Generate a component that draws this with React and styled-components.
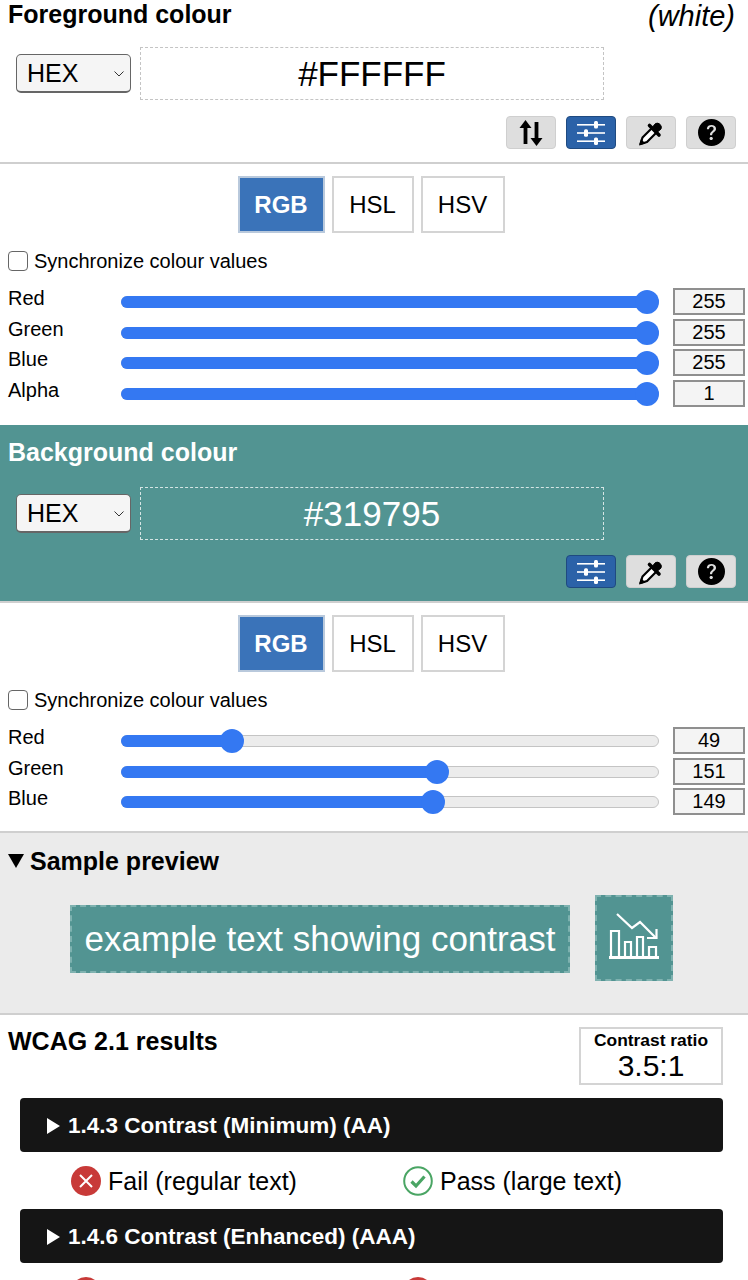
import React from "react";
import styled, { createGlobalStyle } from "styled-components";
import { BsQuestionCircleFill } from "react-icons/bs";

const GlobalStyle = createGlobalStyle`
  html, body {
    margin: 0;
    padding: 0;
    background: #fff;
    overflow: hidden;
    height: 1280px;
  }
  body, input, select {
    font-family: "Liberation Sans", Arial, sans-serif;
    color: #000;
  }
`;

const SwapIcon = () => (
  <svg width="26" height="28" viewBox="0 0 26 28" fill="currentColor">
    <path d="M7.5 1 L13.5 9 H9.4 V25 H5.6 V9 H1.5 Z" />
    <path d="M18.5 27 L12.5 19 H16.6 V3 H20.4 V19 H24.5 Z" />
  </svg>
);

const SlidersIcon = () => (
  <svg width="28" height="26" viewBox="0 0 28 26" fill="#fff">
    <rect x="0" y="4" width="28" height="1.6" />
    <rect x="0" y="12.2" width="28" height="1.6" />
    <rect x="0" y="20.4" width="28" height="1.6" />
    <rect x="17" y="1" width="4" height="7.5" rx="1.5" />
    <rect x="7" y="9.2" width="4" height="7.5" rx="1.5" />
    <rect x="17" y="17.5" width="4" height="7.5" rx="1.5" />
  </svg>
);

const DropperIcon = () => (
  <svg width="28" height="28" viewBox="0 0 28 28">
    <path d="M3.5 25 L5.5 18.5 L15 9 L19.5 13.5 L10 23 Z" fill="#fff" stroke="#000" strokeWidth="2.2" strokeLinejoin="round" />
    <path d="M2 26.5 L4 20 L8.5 24.5 Z" fill="#000" />
    <path d="M12.5 6.5 L22 16" stroke="#000" strokeWidth="3.6" strokeLinecap="round" />
    <path d="M15.5 8 L18.5 4.5 A4.2 4.2 0 0 1 24 10 L20.5 13 Z" fill="#000" stroke="#000" />
  </svg>
);

const FailIcon = () => (
  <svg width="30" height="30" viewBox="0 0 30 30">
    <circle cx="15" cy="15" r="15" fill="#c83a38" />
    <path d="M9 9 L21 21 M21 9 L9 21" stroke="#fff" strokeWidth="2" />
  </svg>
);

const PassIcon = () => (
  <svg width="30" height="30" viewBox="0 0 30 30">
    <circle cx="15" cy="15" r="13.8" fill="#fff" stroke="#4aa564" strokeWidth="2" />
    <path d="M8.5 15.5 L13 20 L21.5 10.5" fill="none" stroke="#4aa564" strokeWidth="3.2" />
  </svg>
);

const ChartIcon = () => (
  <svg width="52" height="50" viewBox="0 0 52 50" fill="none" stroke="#fff" strokeWidth="2.2">
    <path d="M1 44.5 H51" strokeWidth="3" />
    <path d="M3 44 V18 H11 V44" />
    <path d="M17 44 V29 H23 V44" />
    <path d="M29 44 V24 H35 V44" />
    <path d="M41 44 V34 H48 V44" />
    <path d="M9 1 L24 15 L32 9 L48 25" />
    <path d="M39 25 H48.5 V16" />
  </svg>
);

const Chevron = () => (
  <svg width="12" height="8" viewBox="0 0 12 8" fill="none" stroke="#333" strokeWidth="1">
    <path d="M1.5 1.5 L6 6 L10.5 1.5" />
  </svg>
);

const Page = styled.div`
  width: 748px;
  height: 1280px;
  overflow: hidden;
`;

const ColourSection = styled.section`
  height: ${(p) => p.$height}px;
  padding-top: ${(p) => p.$top}px;
  box-sizing: border-box;
  background: ${(p) => (p.$teal ? "#529492" : "#fff")};
  color: ${(p) => (p.$teal ? "#fff" : "#000")};
`;

const HeaderRow = styled.div`
  display: flex;
  justify-content: space-between;
  padding: 0 13px 0 8px;
`;

const Heading = styled.h2`
  margin: 0;
  font-size: 25px;
  line-height: 28px;
  font-weight: 700;
`;

const ColourName = styled.em`
  font-size: 29px;
  line-height: 32px;
`;

const FormatRow = styled.div`
  display: flex;
  align-items: center;
  gap: 9px;
  padding-left: 16px;
  margin-top: ${(p) => p.$top}px;
`;

const SelectWrap = styled.div`
  position: relative;
  width: 115px;
  height: 39px;
`;

const FormatSelect = styled.select`
  appearance: none;
  width: 100%;
  height: 100%;
  box-sizing: border-box;
  padding: 0 0 0 10px;
  font-size: 25px;
  background: #f5f5f5;
  border: 1px solid #666;
  border-bottom-width: 2px;
  border-radius: 5px;
`;

const SelectArrow = styled.span`
  position: absolute;
  right: 6px;
  top: 16px;
  line-height: 0;
  pointer-events: none;
`;

const ColourInput = styled.input`
  width: 464px;
  height: 53px;
  box-sizing: border-box;
  border: 1px dashed ${(p) => (p.$teal ? "#d5e5e4" : "#c4c4c4")};
  background: transparent;
  color: inherit;
  text-align: center;
  font-size: 35px;
  padding: 0;
  outline: none;
`;

const ToolRow = styled.div`
  display: flex;
  justify-content: flex-end;
  gap: 10px;
  padding-right: 12px;
  margin-top: ${(p) => p.$top}px;
`;

const ToolButton = styled.button`
  width: 50px;
  height: 33px;
  padding: 0;
  display: flex;
  align-items: center;
  justify-content: center;
  border-radius: 4px;
  color: #000;
  border: 1px solid ${(p) => (p.$active ? "#1f4a80" : "#cfcfcf")};
  background: ${(p) => (p.$active ? "#2b62a8" : "#dedede")};
`;

const Panel = styled.section`
  height: ${(p) => p.$height}px;
  box-sizing: border-box;
  padding-top: 12px;
  border-top: 2px solid #cfcfcf;
`;

const Tabs = styled.div`
  display: flex;
  justify-content: center;
  gap: 7px;
  padding-right: 6px;
`;

const Tab = styled.button`
  width: ${(p) => p.$width}px;
  height: 57px;
  padding: 0;
  box-sizing: border-box;
  font-family: inherit;
  font-size: 24px;
  color: ${(p) => (p.$active ? "#fff" : "#000")};
  font-weight: ${(p) => (p.$active ? 700 : 400)};
  background: ${(p) => (p.$active ? "#3a73b9" : "#fff")};
  border: 2px solid ${(p) => (p.$active ? "#b9c9dc" : "#d4d4d4")};
`;

const SyncRow = styled.label`
  display: flex;
  align-items: center;
  gap: 6px;
  margin: 18px 0 0 8px;
  font-size: 20px;
  line-height: 20px;
`;

const Checkbox = styled.span`
  width: 18px;
  height: 18px;
  border: 1px solid #666;
  border-radius: 4px;
  background: #fff;
`;

const SliderList = styled.div`
  margin-top: 17px;
  display: flex;
  flex-direction: column;
  gap: 3.7px;
`;

const SliderRow = styled.div`
  display: grid;
  grid-template-columns: 99px 538px 72px;
  column-gap: 14px;
  padding-left: 8px;
  height: 27px;
  align-items: center;
`;

const SliderLabel = styled.span`
  font-size: 20px;
  line-height: 22px;
  margin-top: -7px;
`;

const Track = styled.div`
  position: relative;
  height: 12px;
  margin-top: 1px;
  box-sizing: border-box;
  border-radius: 6px;
  background: #ececec;
  border: 1px solid #c4c4c4;
`;

const TrackFill = styled.div`
  position: absolute;
  left: -1px;
  top: -1px;
  bottom: -1px;
  background: #3478f2;
  border-radius: 6px;
`;

const Thumb = styled.div`
  position: absolute;
  top: -7px;
  width: 24px;
  height: 24px;
  margin-left: -13px;
  border-radius: 50%;
  background: #3478f2;
`;

const ValueBox = styled.input`
  width: 72px;
  height: 27px;
  box-sizing: border-box;
  border: 2px solid #8f8f8f;
  background: #f4f4f4;
  text-align: center;
  font-size: 20px;
  padding: 0;
  outline: none;
`;

const PreviewSection = styled.section`
  height: 182px;
  box-sizing: border-box;
  background: #ebebeb;
  border-top: 2px solid #cfcfcf;
  padding-top: 14px;
`;

const PreviewTitle = styled.div`
  display: flex;
  align-items: center;
  gap: 6px;
  padding-left: 8px;
  font-size: 25px;
  line-height: 28px;
  font-weight: 700;
`;

const TriangleDown = styled.span`
  width: 0;
  height: 0;
  border-left: 8px solid transparent;
  border-right: 8px solid transparent;
  border-top: 14px solid #000;
`;

const PreviewRow = styled.div`
  display: flex;
  align-items: center;
  gap: 25px;
  padding-left: 70px;
  margin-top: 20px;
`;

const SampleText = styled.div`
  width: 500px;
  height: 68px;
  margin-top: 2px;
  box-sizing: border-box;
  display: flex;
  align-items: center;
  justify-content: center;
  background: #529492;
  color: #fff;
  font-size: 35px;
  border: 2px dashed #7fb2b0;
  white-space: nowrap;
`;

const SampleIcon = styled.div`
  width: 78px;
  height: 86px;
  box-sizing: border-box;
  display: flex;
  align-items: center;
  justify-content: center;
  background: #529492;
  border: 2px dashed #7fb2b0;
`;

const ResultsSection = styled.section`
  border-top: 2px solid #cfcfcf;
`;

const ResultsHeader = styled.div`
  display: flex;
  justify-content: space-between;
  align-items: flex-start;
  padding: 12px 25px 0 8px;
`;

const RatioBox = styled.div`
  width: 144px;
  height: 58px;
  box-sizing: border-box;
  border: 2px solid #d4d4d4;
  text-align: center;
  font-size: 17.4px;
  line-height: 20px;
  font-weight: 700;
  padding-top: 1px;
`;

const RatioValue = styled.div`
  font-size: 30px;
  line-height: 32px;
  font-weight: 400;
`;

const Criterion = styled.div`
  display: flex;
  align-items: center;
  gap: 8px;
  height: 54px;
  box-sizing: border-box;
  padding: 2px 0 0 27px;
  margin: ${(p) => p.$top}px 25px 0 20px;
  background: #151515;
  color: #fff;
  border-radius: 4px;
  font-size: 22.5px;
  font-weight: 700;
`;

const TriangleRight = styled.span`
  width: 0;
  height: 0;
  border-top: 8px solid transparent;
  border-bottom: 8px solid transparent;
  border-left: 13px solid #fff;
`;

const ResultRow = styled.div`
  display: grid;
  grid-template-columns: 332px 1fr;
  padding: 14px 0 0 71px;
  height: 43px;
  box-sizing: content-box;
`;

const Result = styled.div`
  display: flex;
  align-items: center;
  gap: 7px;
  font-size: 25px;
  height: 30px;
`;

const ColourPanel = ({ values, height }) => (
  <Panel $height={height}>
    <Tabs>
      <Tab $width={87} $active>RGB</Tab>
      <Tab $width={82}>HSL</Tab>
      <Tab $width={84}>HSV</Tab>
    </Tabs>
    <SyncRow>
      <Checkbox />
      Synchronize colour values
    </SyncRow>
    <SliderList>
      {values.map(([label, value, max]) => {
        // thumb stays inside the track, 12px from each end
        const x = 12 + (value / max) * 514;
        return (
          <SliderRow key={label}>
            <SliderLabel>{label}</SliderLabel>
            <Track>
              <TrackFill style={{ width: x + 1 }} />
              <Thumb style={{ left: x }} />
            </Track>
            <ValueBox readOnly value={value} />
          </SliderRow>
        );
      })}
    </SliderList>
  </Panel>
);

const FormatControls = ({ colour, teal, top }) => (
  <FormatRow $top={top}>
    <SelectWrap>
      <FormatSelect defaultValue="HEX">
        <option>HEX</option>
      </FormatSelect>
      <SelectArrow><Chevron /></SelectArrow>
    </SelectWrap>
    <ColourInput readOnly value={colour} $teal={teal} />
  </FormatRow>
);

const App = () => (
  <Page>
    <GlobalStyle />
    <ColourSection $height={162} $top={0}>
      <HeaderRow>
        <Heading>Foreground colour</Heading>
        <ColourName>(white)</ColourName>
      </HeaderRow>
      <FormatControls colour="#FFFFFF" top={15} />
      <ToolRow $top={16}>
        <ToolButton><SwapIcon /></ToolButton>
        <ToolButton $active><SlidersIcon /></ToolButton>
        <ToolButton><DropperIcon /></ToolButton>
        <ToolButton><BsQuestionCircleFill size={27} /></ToolButton>
      </ToolRow>
    </ColourSection>
    <ColourPanel
      height={263}
      values={[["Red", 255, 255], ["Green", 255, 255], ["Blue", 255, 255], ["Alpha", 1, 1]]}
    />
    <ColourSection $teal $height={176} $top={13}>
      <HeaderRow>
        <Heading>Background colour</Heading>
      </HeaderRow>
      <FormatControls colour="#319795" teal top={21} />
      <ToolRow $top={15}>
        <ToolButton $active><SlidersIcon /></ToolButton>
        <ToolButton><DropperIcon /></ToolButton>
        <ToolButton><BsQuestionCircleFill size={27} /></ToolButton>
      </ToolRow>
    </ColourSection>
    <ColourPanel
      height={230}
      values={[["Red", 49, 255], ["Green", 151, 255], ["Blue", 149, 255]]}
    />
    <PreviewSection>
      <PreviewTitle>
        <TriangleDown />
        Sample preview
      </PreviewTitle>
      <PreviewRow>
        <SampleText>example text showing contrast</SampleText>
        <SampleIcon><ChartIcon /></SampleIcon>
      </PreviewRow>
    </PreviewSection>
    <ResultsSection>
      <ResultsHeader>
        <Heading>WCAG 2.1 results</Heading>
        <RatioBox>
          Contrast ratio
          <RatioValue>3.5:1</RatioValue>
        </RatioBox>
      </ResultsHeader>
      <Criterion $top={13}>
        <TriangleRight />
        1.4.3 Contrast (Minimum) (AA)
      </Criterion>
      <ResultRow>
        <Result><FailIcon />Fail (regular text)</Result>
        <Result><PassIcon />Pass (large text)</Result>
      </ResultRow>
      <Criterion $top={0}>
        <TriangleRight />
        1.4.6 Contrast (Enhanced) (AAA)
      </Criterion>
      <ResultRow>
        <Result><FailIcon /></Result>
        <Result><FailIcon /></Result>
      </ResultRow>
    </ResultsSection>
  </Page>
);

export default App;
